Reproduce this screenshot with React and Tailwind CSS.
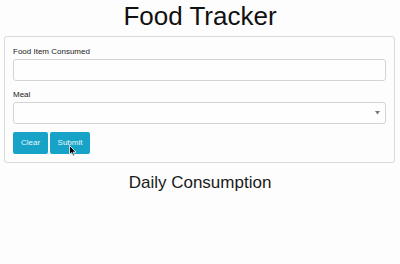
import React from "react";

export default function App() {
  return (
    <div className="w-[400px] h-[264px] bg-[#fdfdfd] text-[#111] relative overflow-hidden" style={{ fontFamily: '"Liberation Sans", Arial, sans-serif' }}>
      <h1 className="text-[26px] leading-[32px] text-center text-[#111]">Food Tracker</h1>
      <div className="mt-[4px] ml-[4px] mr-[5px] border border-[#dadada] rounded-[3px] bg-[#fdfdfd] px-[8px] pt-[10px] pb-[8px]">
        <div className="text-[8px] leading-[10px] text-[#222] mb-[2px]">Food Item Consumed</div>
        <div className="h-[22px] border border-[#d4d4d4] rounded-[3px] bg-[#fefefe]"></div>
        <div className="text-[8px] leading-[10px] text-[#222] mt-[9px] mb-[2px]">Meal</div>
        <div className="h-[22px] border border-[#d4d4d4] rounded-[3px] bg-[#fefefe] flex items-center justify-end pr-[5px]">
          <svg width="5" height="4" viewBox="0 0 5 4"><path d="M0 0 L5 0 L2.5 3.5 Z" fill="#777" /></svg>
        </div>
        <div className="mt-[8px] flex gap-[2px]">
          <button className="w-[35px] h-[22px] bg-[#17a3c8] text-[#e8f7fb] text-[8px] rounded-[2px] flex items-center justify-center">Clear</button>
          <button className="w-[40px] h-[22px] bg-[#17a3c8] text-[#e8f7fb] text-[8px] rounded-[2px] flex items-center justify-center">Submit</button>
        </div>
      </div>
      <h2 className="mt-[10px] text-[17px] leading-[20px] text-center text-[#1a1a1a]">Daily Consumption</h2>
      <svg className="absolute left-[69px] top-[145px]" width="8" height="12" viewBox="0 0 8 12">
        <path d="M0.5 0.5 L0.5 9.5 L2.6 7.6 L4.1 11 L5.5 10.4 L4.1 7.1 L7 7.1 Z" fill="#000" stroke="#fff" strokeWidth="0.8" strokeLinejoin="round" />
      </svg>
    </div>
  );
}
